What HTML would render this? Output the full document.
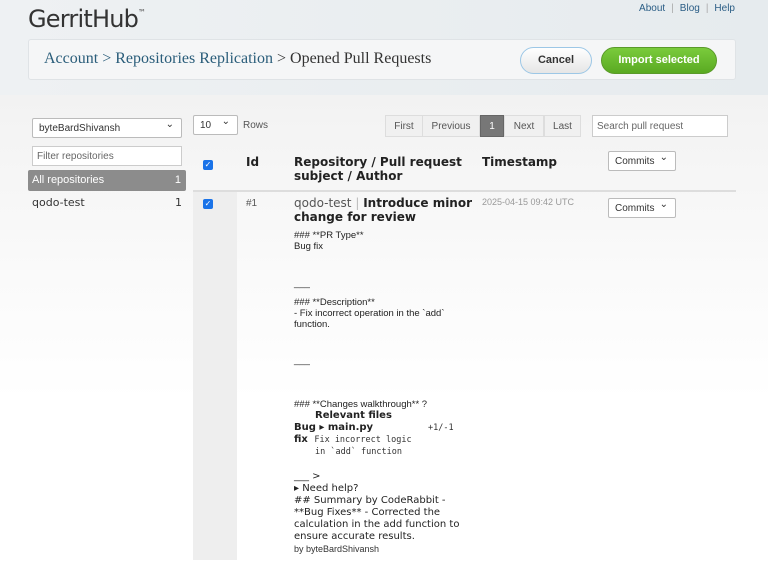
<!DOCTYPE html>
<html><head><style>
*{margin:0;padding:0;box-sizing:border-box}
body{width:768px;height:578px;overflow:hidden;font-family:"Liberation Sans",sans-serif;background:linear-gradient(#f2f2f2 95px,#f7f7f7 200px,#fff 400px);position:relative;color:#222}
.a{position:absolute}
.hdr{left:0;top:0;width:768px;height:95px;background:linear-gradient(90deg,#eef1f3,#e6ebee)}
.logo{left:28px;top:5px;font-size:24px;color:#333;font-family:"DejaVu Sans",sans-serif;letter-spacing:-0.8px}
.logo sup{font-size:8px;vertical-align:top;position:relative;top:3px}
.links{right:33px;top:3px;font-size:10px;color:#2a5d85}
.links span{color:#aaa;margin:0 6px}
.bar{left:28px;top:39px;width:708px;height:41px;background:#f5f6f7;border:1px solid #dfe3e6;border-radius:3px}
.crumb{left:44px;top:50px;font-family:"Liberation Serif",serif;font-size:16px;color:#2a5d7a}
.crumb b{font-weight:normal;color:#333}
.btn{top:47px;height:27px;border-radius:14px;font-size:11px;font-weight:bold;text-align:center;line-height:25px}
.cancel{left:520px;width:72px;background:linear-gradient(#fff,#e6e6e6);border:1px solid #9cc7e6;color:#333}
.imp{left:601px;width:116px;background:linear-gradient(#7acb3c,#5aaa22);color:#fff;border:1px solid #5a9a2a}
.sel{background:#fff;border:1px solid #bbb;border-radius:2px;font-size:10px;color:#333;padding-left:6px;line-height:19px;height:20px}
.sel:after{content:"\2304";position:absolute;right:7px;top:-4px;font-size:10px}
.inp{background:#fff;border:1px solid #ccc;font-size:10px;color:#666;padding-left:4px;line-height:19px;height:20px}
.pg{top:115px;height:22px;border:1px solid #ddd;background:#f0f0f0;font-size:10px;color:#555;line-height:21px;text-align:center}
.cb{width:10px;height:10px;background:#1a73e8;border-radius:2px;color:#fff;font-size:8px;line-height:10px;text-align:center}
.th{font-size:12px;font-weight:bold;color:#222;font-family:"DejaVu Sans",sans-serif;line-height:14px}
.t{font-size:9.5px;color:#222;line-height:11px}
.m{font-family:"DejaVu Sans Mono",monospace;font-size:8.5px;color:#333}
</style></head><body>
<div class="a hdr"></div>
<div class="a logo">GerritHub<sup>™</sup></div>
<div class="a links">About<span>|</span>Blog<span>|</span>Help</div>
<div class="a bar"></div>
<div class="a crumb">Account &gt; Repositories Replication <b>&gt; Opened Pull Requests</b></div>
<div class="a btn cancel">Cancel</div>
<div class="a btn imp">Import selected</div>

<div class="a sel" style="left:32px;top:118px;width:150px">byteBardShivansh</div>
<div class="a inp" style="left:32px;top:146px;width:150px">Filter repositories</div>
<div class="a" style="left:28px;top:170px;width:158px;height:21px;background:#8c8c8c;color:#fff;font-size:11px;line-height:21px;padding-left:4px;border-radius:2px">All repositories<span style="position:absolute;right:5px">1</span></div>
<div class="a" style="left:32px;top:196px;width:150px;font-size:11px;color:#333;font-family:'DejaVu Sans',sans-serif">qodo-test<span style="position:absolute;right:0">1</span></div>

<div class="a sel" style="left:193px;top:115px;width:45px">10</div>
<div class="a" style="left:243px;top:120px;font-size:10px;color:#555">Rows</div>
<div class="a pg" style="left:385px;width:38px">First</div>
<div class="a pg" style="left:422px;width:58px">Previous</div>
<div class="a pg" style="left:480px;width:24px;background:#777;color:#fff;border-color:#666">1</div>
<div class="a pg" style="left:504px;width:40px">Next</div>
<div class="a pg" style="left:544px;width:37px">Last</div>
<div class="a inp" style="left:592px;top:115px;width:136px;height:22px;line-height:21px">Search pull request</div>

<div class="a" style="left:193px;top:190px;width:44px;height:370px;background:#eee"></div>
<div class="a" style="left:193px;top:190px;width:543px;height:2px;background:#ddd"></div>
<div class="a cb" style="left:203px;top:160px">✓</div>
<div class="a th" style="left:246px;top:155px">Id</div>
<div class="a th" style="left:294px;top:155px">Repository / Pull request<br>subject / Author</div>
<div class="a th" style="left:482px;top:155px">Timestamp</div>
<div class="a sel" style="left:608px;top:151px;width:68px">Commits</div>

<div class="a cb" style="left:203px;top:199px">✓</div>
<div class="a" style="left:246px;top:198px;font-size:10px;color:#555">#1</div>
<div class="a th" style="left:294px;top:196px;font-weight:normal"><span style="color:#555">qodo-test</span> <span style="color:#bbb;font-weight:normal">|</span> <b>Introduce minor</b><br><b>change for review</b></div>
<div class="a" style="left:482px;top:197px;font-size:9px;color:#999">2025-04-15 09:42 UTC</div>
<div class="a sel" style="left:608px;top:198px;width:68px">Commits</div>

<div class="a t" style="left:294px;top:230px">### **PR Type**<br>Bug fix</div>
<div class="a t" style="left:294px;top:278px">___</div>
<div class="a t" style="left:294px;top:297px">### **Description**<br>- Fix incorrect operation in the `add`<br>function.</div>
<div class="a t" style="left:294px;top:355px">___</div>
<div class="a t" style="left:294px;top:399px">### **Changes walkthrough** ?</div>
<div class="a" style="left:294px;top:410px;font-size:10px;font-weight:bold;font-family:'DejaVu Sans',sans-serif;line-height:12px;color:#222">
<div style="padding-left:21px">Relevant files</div>
<div>Bug ▸ main.py<span style="position:absolute;left:134px;font-weight:normal" class="m">+1/-1</span></div>
<div>fix <span class="m" style="font-weight:normal;margin-left:3px">Fix incorrect logic</span></div>
<div class="m" style="font-weight:normal;padding-left:21px">in `add` function</div>
</div>
<div class="a" style="left:294px;top:471px;font-size:10px;line-height:12px;color:#222;font-family:'DejaVu Sans',sans-serif">___ &gt;<br>▸ Need help?<br>## Summary by CodeRabbit -<br>**Bug Fixes** - Corrected the<br>calculation in the add function to<br>ensure accurate results.</div>
<div class="a" style="left:294px;top:544px;font-size:9px;color:#333">by byteBardShivansh</div>
</body></html>
